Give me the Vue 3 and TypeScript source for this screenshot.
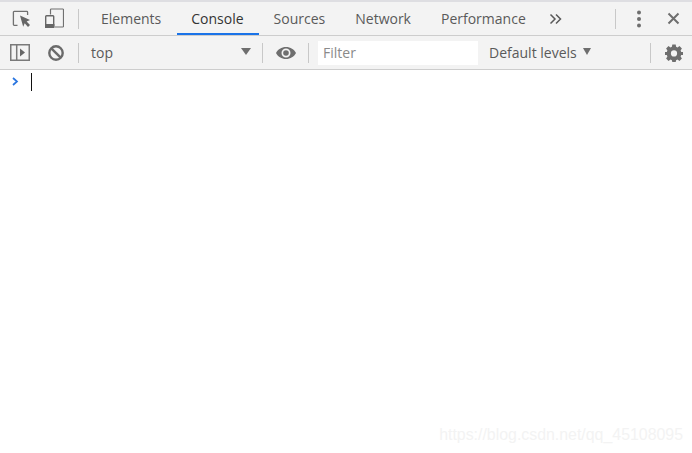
<script setup lang="ts">
const tabs: string[] = ['Elements', 'Console', 'Sources', 'Network', 'Performance']
</script>

<template>
  <div class="page">
    <div class="strip"></div>
    <div class="bar tabsbar">
      <svg class="ic inspect" width="18" height="19" viewBox="0 0 18 19">
        <path d="M5.500 16.400H2.200A0.800 0.800 0 0 1 1.400 15.600V3.200A0.800 0.800 0 0 1 2.200 2.400H14.800A0.800 0.800 0 0 1 15.600 3.200V6" fill="none" stroke="#707070" stroke-width="1.300"/>
        <path d="M8 6.500L18 11L14.600 12.500L18 16L16 18L12.700 14.300L11.200 17.800Z" fill="#666"/>
      </svg>
      <svg class="ic device" width="20" height="21" viewBox="0 0 20 21">
        <path d="M6.500 6.500V1.800A0.800 0.800 0 0 1 7.300 1H18.700A0.800 0.800 0 0 1 19.500 1.800V18.200A0.800 0.800 0 0 1 18.700 19H11" fill="none" stroke="#707070" stroke-width="1.200"/>
        <rect x="1.700" y="7.700" width="8" height="11.600" rx="0.800" fill="none" stroke="#666" stroke-width="1.400"/>
        <rect x="1" y="16" width="9.400" height="4" fill="#666"/>
      </svg>
      <span class="sep sep1"></span>
      <div class="tabs">
        <div v-for="t in tabs" :key="t" class="tab" :class="{ active: t === 'Console' }">{{ t }}</div>
      </div>
      <svg class="more" width="14" height="12" viewBox="0 0 14 12">
        <path d="M1.500 1.500L6 6L1.500 10.500M7 1.500L11.500 6L7 10.500" fill="none" stroke="#5a5a5a" stroke-width="1.500"/>
      </svg>
      <span class="spacer"></span>
      <span class="sep sep2"></span>
      <svg class="dots" width="4" height="18" viewBox="0 0 4 18">
        <circle cx="2" cy="2.500" r="2" fill="#6e6e6e"/>
        <circle cx="2" cy="9" r="2" fill="#6e6e6e"/>
        <circle cx="2" cy="15.500" r="2" fill="#6e6e6e"/>
      </svg>
      <svg class="close" width="13" height="13" viewBox="0 0 13 13">
        <path d="M1.500 1.500L11.500 11.500M11.500 1.500L1.500 11.500" stroke="#6e6e6e" stroke-width="2"/>
      </svg>
    </div>
    <div class="bar toolbar">
      <svg class="sidebar" width="20" height="17" viewBox="0 0 20 17">
        <rect x="0.750" y="0.750" width="18.500" height="15.500" fill="none" stroke="#7a7a7a" stroke-width="1.500"/>
        <path d="M6.700 1V16" stroke="#7a7a7a" stroke-width="1.500"/>
        <path d="M10 4.500L15 8.500L10 12.500Z" fill="#666"/>
      </svg>
      <svg class="clear" width="16" height="16" viewBox="0 0 16 16">
        <circle cx="8" cy="8" r="6.700" fill="none" stroke="#6a6a6a" stroke-width="2.400"/>
        <path d="M3.300 3.300L12.700 12.700" stroke="#6a6a6a" stroke-width="2.400"/>
      </svg>
      <span class="sep sep3"></span>
      <div class="context">
        <span>top</span>
        <span class="tri"></span>
      </div>
      <span class="sep sep4"></span>
      <svg class="eye" width="20" height="14" viewBox="0 0 20 14">
        <path fill-rule="evenodd" d="M10 1C5.500 1 1.800 3.500 0 7C1.800 10.500 5.500 13 10 13C14.500 13 18.200 10.500 20 7C18.200 3.500 14.500 1 10 1ZM10 11.500A4.500 4.500 0 1 1 10 2.500A4.500 4.500 0 0 1 10 11.500Z" fill="#6e6e6e"/>
        <circle cx="10" cy="7" r="2.800" fill="#6e6e6e"/>
      </svg>
      <span class="sep sep5"></span>
      <div class="filter">Filter</div>
      <div class="levels">Default levels<span class="tri small"></span></div>
      <span class="spacer"></span>
      <span class="sep sep6"></span>
      <svg class="gear" width="18" height="18" viewBox="0 0 18 18">
        <path fill-rule="evenodd" fill="#6e6e6e" d="M7.300 0.500H10.700L11.100 2.800L12.500 3.400L14.500 2.100L16.900 4.500L15.600 6.400L16.200 7.900L18 8V11L16.200 11.100L15.600 12.600L16.900 14.500L14.500 16.900L12.500 15.600L11.100 16.200L10.700 18H7.300L6.900 16.200L5.500 15.600L3.500 16.900L1.100 14.500L2.400 12.600L1.800 11.100L0 11V8L1.800 7.900L2.400 6.400L1.100 4.500L3.500 2.100L5.500 3.400L6.900 2.800ZM9 6.300A3.100 3.100 0 1 0 9 12.500A3.100 3.100 0 0 0 9 6.300Z"/>
      </svg>
    </div>
    <div class="console">
      <svg class="prompt" width="7" height="9" viewBox="0 0 7 9">
        <path d="M1 1L5 4.500L1 8" fill="none" stroke="#2a76e0" stroke-width="1.700"/>
      </svg>
      <span class="caret"></span>
      <span class="mark">https://blog.csdn.net/qq_45108095</span>
    </div>
  </div>
</template>

<style>
html, body { margin: 0; background: #fff; }
</style>

<style scoped>
.page {
  width: 692px;
  height: 453px;
  overflow: hidden;
  display: flex;
  flex-direction: column;
  background: #fff;
  font-family: "Open Sans", "Noto Sans", sans-serif;
  font-size: 14px;
  color: #5a5a5a;
}
.strip { height: 2px; background: #dedee2; flex: none; }
.bar {
  flex: none;
  display: flex;
  align-items: center;
  background: #f3f3f3;
  border-bottom: 1px solid #cdcdcd;
  box-sizing: border-box;
  padding-left: 12px;
}
.tabsbar { height: 34px; }
.toolbar { height: 34px; padding-left: 10px; }
.sep { flex: none; width: 1px; height: 20px; background: #c8c8c8; }
.ic { flex: none; }
.device { margin-left: 14px; }
.sep1 { margin-left: 14px; }
.tabs { display: flex; align-self: stretch; margin-left: 7px; }
.tab {
  padding: 0 15px;
  line-height: 33px;
  white-space: nowrap;
  box-sizing: border-box;
  height: 33px;
}
.tab.active { color: #333; box-shadow: inset 0 -2px 0 #1a73e8; margin-left: 1px; padding-left: 14px; }
.more { margin-left: 8px; flex: none; }
.spacer { flex: 1; }
.sep2 { margin-right: 21px; }
.dots { flex: none; margin-right: 26px; }
.close { flex: none; margin-right: 12px; }
.clear { flex: none; margin-left: 18px; }
.sep3 { margin-left: 14px; }
.context {
  display: flex;
  align-items: center;
  justify-content: space-between;
  width: 171px;
  margin-left: 12px;
  padding-right: 11px;
  box-sizing: border-box;
}
.tri {
  width: 0;
  height: 0;
  border-left: 5px solid transparent;
  border-right: 5px solid transparent;
  border-top: 7px solid #6e6e6e;
  margin-bottom: 2px;
}
.tri.small {
  display: inline-block;
  border-left-width: 4.500px;
  border-right-width: 4.500px;
  border-top-width: 7px;
  margin: 0 0 0 6px;
  vertical-align: 3px;
}
.eye { flex: none; margin-left: 13px; }
.sep5 { margin-left: 12px; }
.filter {
  margin-left: 9px;
  width: 160px;
  height: 24px;
  line-height: 24px;
  background: #fff;
  padding-left: 5px;
  box-sizing: border-box;
  color: #8a8a8a;
}
.levels { margin-left: 11px; white-space: nowrap; }
.sep6 { margin-right: 14px; }
.gear { flex: none; margin-right: 9px; }
.console {
  position: relative;
  flex: 1;
  display: flex;
  align-items: flex-start;
  background: #fff;
}
.prompt { flex: none; margin: 7px 0 0 12px; }
.caret { flex: none; width: 1px; height: 18px; background: #111; margin: 3px 0 0 12px; }
.mark {
  position: absolute;
  right: 9px;
  bottom: 9px;
  font-family: "Liberation Sans", Arial, sans-serif;
  font-size: 15.900px;
  color: #f3f3f3;
  white-space: nowrap;
}
</style>
